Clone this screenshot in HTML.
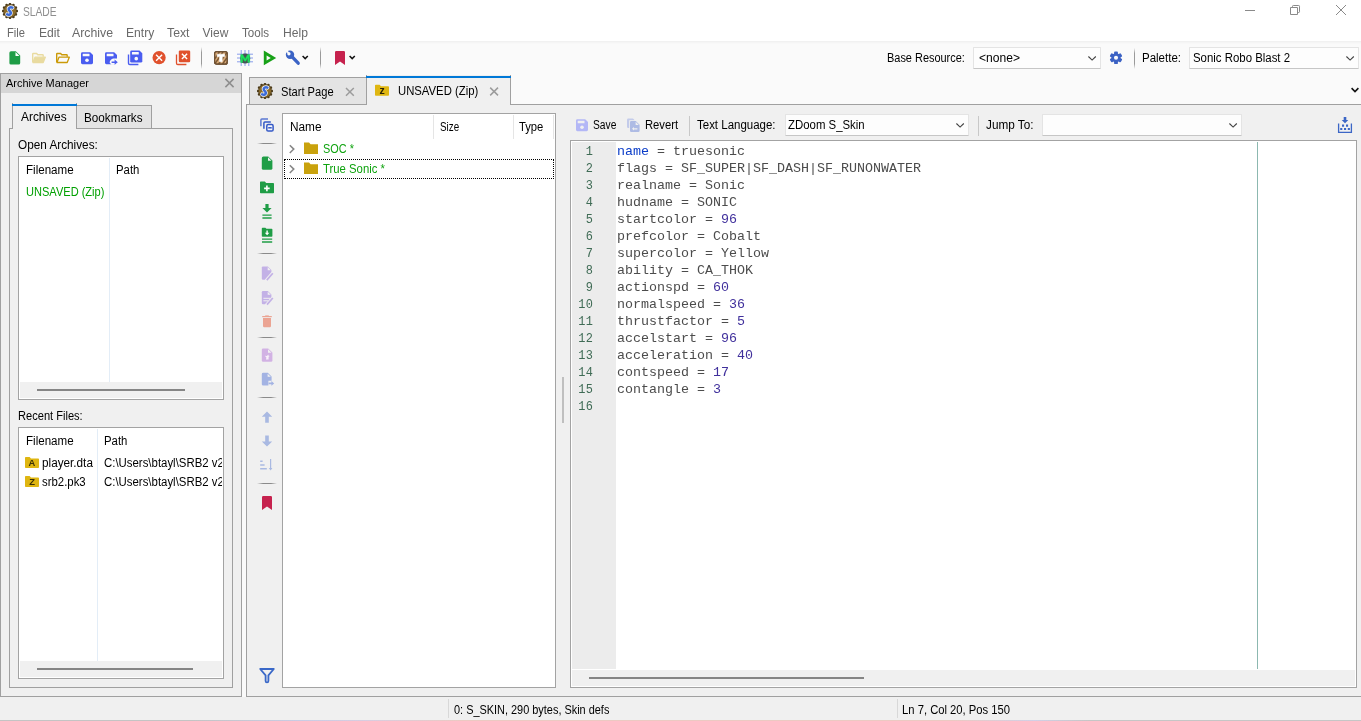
<!DOCTYPE html>
<html>
<head>
<meta charset="utf-8">
<title>SLADE</title>
<style>
*{box-sizing:border-box;margin:0;padding:0}
html,body{width:1361px;height:721px;overflow:hidden;background:#f0f0f0}
body{font-family:"Liberation Sans",sans-serif;font-size:12px;color:#000;position:relative}
.a{position:absolute}
.t{position:absolute;white-space:nowrap;line-height:14px;font-size:12px;transform-origin:0 0}
svg{position:absolute;overflow:visible}
.code{position:absolute;font-family:"Liberation Mono",monospace;font-size:13.333px;line-height:17px;white-space:pre;color:#4c4c4c}
.ln{position:absolute;text-align:right;font-family:"Liberation Mono",monospace;font-size:13.333px;line-height:17px;color:#3f6b55;white-space:pre}
.kw{color:#0a3cc8}
.num{color:#40309c}
</style>
</head>
<body>
<div id="root" style="position:absolute;left:0;top:0;width:1361px;height:721px;will-change:transform">
<div class="a" style="left:0px;top:0px;width:1361px;height:42px;background:#fff;"></div>
<div class="a" style="left:0px;top:42px;width:1361px;height:31px;background:#fafafa;"></div>
<div class="a" style="left:0px;top:41px;width:1361px;height:1px;background:#f1f1f1;"></div>
<div class="a" style="left:0px;top:42px;width:1361px;height:1px;background:#f5f5f5;"></div>
<div class="a" style="left:0px;top:43px;width:1361px;height:1px;background:#f8f8f8;"></div>
<svg style="left:10px;top:11px" width="2" height="2" viewBox="0 0 2 2"><g><rect x="-1.2" y="-8" width="2.4" height="2.6" rx=".7" transform="rotate(0)" fill="#4a3a1a"/><rect x="-1.2" y="-8" width="2.4" height="2.6" rx=".7" transform="rotate(30)" fill="#4a3a1a"/><rect x="-1.2" y="-8" width="2.4" height="2.6" rx=".7" transform="rotate(60)" fill="#4a3a1a"/><rect x="-1.2" y="-8" width="2.4" height="2.6" rx=".7" transform="rotate(90)" fill="#4a3a1a"/><rect x="-1.2" y="-8" width="2.4" height="2.6" rx=".7" transform="rotate(120)" fill="#4a3a1a"/><rect x="-1.2" y="-8" width="2.4" height="2.6" rx=".7" transform="rotate(150)" fill="#4a3a1a"/><rect x="-1.2" y="-8" width="2.4" height="2.6" rx=".7" transform="rotate(180)" fill="#4a3a1a"/><rect x="-1.2" y="-8" width="2.4" height="2.6" rx=".7" transform="rotate(210)" fill="#4a3a1a"/><rect x="-1.2" y="-8" width="2.4" height="2.6" rx=".7" transform="rotate(240)" fill="#4a3a1a"/><rect x="-1.2" y="-8" width="2.4" height="2.6" rx=".7" transform="rotate(270)" fill="#4a3a1a"/><rect x="-1.2" y="-8" width="2.4" height="2.6" rx=".7" transform="rotate(300)" fill="#4a3a1a"/><rect x="-1.2" y="-8" width="2.4" height="2.6" rx=".7" transform="rotate(330)" fill="#4a3a1a"/><circle r="6.9" fill="#57441f"/><circle r="6" fill="#8c6c2a"/><g transform="scale(0.8)"><path d="M3 -4.3C0.6 -5.3 -2.2 -4.2 -1.5 -1.8C-1 0 1.7 0.9 1 3C0.4 4.9 -2 5 -3.5 4.3" fill="none" stroke="#eef2fa" stroke-width="5" stroke-linecap="round"/><path d="M3 -4.3C0.6 -5.3 -2.2 -4.2 -1.5 -1.8C-1 0 1.7 0.9 1 3C0.4 4.9 -2 5 -3.5 4.3" fill="none" stroke="#3b6bd8" stroke-width="3.2" stroke-linecap="round"/></g></g></svg>
<div class="t " style="left:23.30px;top:4.9px;font-size:12px;color:#8e8e8e;transform:scaleX(0.8533);">SLADE</div>
<div class="t " style="left:6.50px;top:25.8px;font-size:12px;color:#6a6a6a;transform:scaleX(0.9320);">File</div>
<div class="t " style="left:38.50px;top:25.8px;font-size:12px;color:#6a6a6a;transform:scaleX(1.0090);">Edit</div>
<div class="t " style="left:72.10px;top:25.8px;font-size:12px;color:#6a6a6a;transform:scaleX(1.0266);">Archive</div>
<div class="t " style="left:126.30px;top:25.8px;font-size:12px;color:#6a6a6a;transform:scaleX(1.0094);">Entry</div>
<div class="t " style="left:167.10px;top:25.8px;font-size:12px;color:#6a6a6a;transform:scaleX(1.0215);">Text</div>
<div class="t " style="left:202.50px;top:25.8px;font-size:12px;color:#6a6a6a;">View</div>
<div class="t " style="left:241.70px;top:25.8px;font-size:12px;color:#6a6a6a;transform:scaleX(0.9664);">Tools</div>
<div class="t " style="left:282.70px;top:25.8px;font-size:12px;color:#6a6a6a;transform:scaleX(1.0101);">Help</div>
<svg style="left:1245px;top:5px" width="11" height="11" viewBox="0 0 11 11"><path d="M0 5.5H10" stroke="#8a8a8a" stroke-width="1" fill="none"/></svg>
<svg style="left:1290px;top:5px" width="11" height="11" viewBox="0 0 11 11"><path d="M0.5 2.5h7v7h-7z M2.5 2.5v-1.2q0-.8.8-.8h5.4q.8 0 .8.8v5.4q0 .8-.8.8H7.5" stroke="#8a8a8a" stroke-width="1" fill="none"/></svg>
<svg style="left:1336px;top:5px" width="11" height="11" viewBox="0 0 11 11"><path d="M0 0L10 10M10 0L0 10" stroke="#8a8a8a" stroke-width="1" fill="none"/></svg>
<div class="t " style="left:453.50px;top:702.6px;font-size:12px;color:#000;transform:scaleX(0.9098);">0: S_SKIN, 290 bytes, Skin defs</div>
<div class="t " style="left:901.70px;top:702.6px;font-size:12px;color:#000;transform:scaleX(0.9368);">Ln 7, Col 20, Pos 150</div>
<div class="a" style="left:448px;top:699px;width:1px;height:19px;background:#d8d8d8;"></div>
<div class="a" style="left:897px;top:699px;width:1px;height:19px;background:#d8d8d8;"></div>
<div class="a" style="left:0px;top:720px;width:1361px;height:1px;background:linear-gradient(90deg,#c4c4c4 0,#c4c4c4 14%,#c9cce4 22%,#d9cde0 27%,#ecc9c2 34%,#ecc9c2 70%,#d2d0e6 76%,#c6c6c6 80%,#c6c6c6 100%)"></div>
<svg style="left:9px;top:51px" width="12" height="15" viewBox="0 0 12 15"><g transform="translate(0.40,0.20)"><path d="M1.6 0H6.4L10.8 4.4V11.8Q10.8 13.4 9.2 13.4H1.6Q0 13.4 0 11.8V1.6Q0 0 1.6 0Z" fill="#1f9d46"/><path d="M6.1 0.8V4.7H10Z" fill="#fff"/></g></svg>
<svg style="left:32px;top:52px" width="15" height="12" viewBox="0 0 15 12"><g transform="translate(0.00,0.80)"><path d="M0.7 9.2V1.2Q0.7 0.7 1.2 0.7H4.6L5.8 2H10.6Q11.2 2 11.2 2.6V4" fill="none" stroke="#e9dba0" stroke-width="1.4"/><path d="M0.9 9.7L3 4.4H13.3L11.2 9.7Z" fill="#e9dba0" stroke="#e9dba0" stroke-width="1.3" stroke-linejoin="round"/></g></svg>
<svg style="left:56px;top:52px" width="15" height="12" viewBox="0 0 15 12"><g transform="translate(0.00,0.80)"><path d="M0.7 9.2V1.2Q0.7 0.7 1.2 0.7H4.6L5.8 2H10.6Q11.2 2 11.2 2.6V4" fill="none" stroke="#cb9a08" stroke-width="1.4"/><path d="M0.9 9.7L3 4.4H13.3L11.2 9.7Z" fill="#fafafa" stroke="#cb9a08" stroke-width="1.3" stroke-linejoin="round"/></g></svg>
<svg style="left:81px;top:52px" width="13" height="13" viewBox="0 0 13 13"><g transform="translate(0.00,0.20) scale(1.0000)"><path d="M1.4 0H9.2L12 2.8V10.6Q12 12 10.6 12H1.4Q0 12 0 10.6V1.4Q0 0 1.4 0Z" fill="#4a5df0"/><rect x="1.7" y="1.5" width="6.8" height="2.5" rx=".3" fill="#fafafa"/><circle cx="6" cy="8.1" r="1.8" fill="#fafafa"/></g></svg>
<svg style="left:105px;top:52px" width="14" height="14" viewBox="0 0 14 14"><g transform="translate(0.00,0.20)"><path d="M1.4 0H9.2L12 2.8V10.6Q12 12 10.6 12H1.4Q0 12 0 10.6V1.4Q0 0 1.4 0Z" fill="#4a5df0"/><rect x="1.7" y="1.5" width="6.8" height="2.5" rx=".3" fill="#fafafa"/><path d="M12.6 6.2H8.4Q5 7 4.6 10.2L6.4 12.6H12.6Z" fill="#fafafa"/><path d="M6.6 9.2H9.6V7.4L12.8 10 9.6 12.6V10.8H6.6Z" fill="#4a5df0"/></g></svg>
<svg style="left:127px;top:50px" width="16" height="16" viewBox="0 0 16 16"><g transform="translate(0.80,0.60)"><path d="M0.7 4V12.6Q0.7 13.9 2 13.9H10.6" fill="none" stroke="#4a5df0" stroke-width="1.4"/></g></svg>
<svg style="left:130px;top:50px" width="14" height="14" viewBox="0 0 14 14"><g transform="translate(0.20,0.50) scale(1.0083)"><path d="M1.4 0H9.2L12 2.8V10.6Q12 12 10.6 12H1.4Q0 12 0 10.6V1.4Q0 0 1.4 0Z" fill="#4a5df0"/><rect x="1.7" y="1.5" width="6.8" height="2.5" rx=".3" fill="#fafafa"/><circle cx="6" cy="8.1" r="1.8" fill="#fafafa"/></g></svg>
<svg style="left:152px;top:51px" width="15" height="15" viewBox="0 0 15 15"><g transform="translate(0.40,0.00)"><circle cx="6.7" cy="6.7" r="6.6" fill="#e0512d"/><path d="M3.7 3.7L9.7 9.7M9.7 3.7L3.7 9.7" stroke="#fff" stroke-width="1.4"/></g></svg>
<svg style="left:175px;top:50px" width="16" height="16" viewBox="0 0 16 16"><g transform="translate(0.80,0.60)"><path d="M0.7 4V12.6Q0.7 13.9 2 13.9H10.6" fill="none" stroke="#e0512d" stroke-width="1.3"/><rect x="3" y="0" width="11.4" height="11.6" rx="1.2" fill="#e0512d"/><path d="M6.1 3.2L11.3 8.4M11.3 3.2L6.1 8.4" stroke="#fff" stroke-width="1.4"/></g></svg>
<div class="a" style="left:201px;top:47px;width:1px;height:22px;background:linear-gradient(#fafafa,#9a9a9a 25%,#9a9a9a 75%,#fafafa)"></div>
<svg style="left:214px;top:51px" width="15" height="15" viewBox="0 0 15 15"><rect x="0.6" y="0.6" width="12.6" height="12.6" rx="2" fill="#d9aa78" stroke="#6f5235" stroke-width="1.2"/><path d="M1 7.6L5.4 1M1 12.6L9 1M4.6 13L12.8 1.6M8.6 13L12.8 6.8M12 13L13 11.6" stroke="#6b4a28" stroke-width="1.5" opacity=".85"/><rect x="0.6" y="0.6" width="12.6" height="12.6" rx="2" fill="none" stroke="#6f5235" stroke-width="1.2"/><path d="M3.2 3.2H10.6V5.6H8.2V10.8H5.6V5.6H3.2Z" fill="#fff" stroke="#fff" stroke-width=".6" stroke-linejoin="round"/></svg>
<svg style="left:237px;top:50px" width="17" height="17" viewBox="0 0 17 17"><path d="M4.2 0V16M8 0V16M11.8 0V16M0 4.2H16M0 8H16M0 11.8H16" stroke="#4a68e4" stroke-width=".8" opacity=".8"/><circle cx="8.2" cy="8.6" r="5" fill="#4a5058"/><path d="M3.7 12.5V4.6H5.8L8.2 8.8 10.6 4.6H12.7V12.5H10.7V7.9L8.8 11.2H7.6L5.7 7.9V12.5Z" fill="#1fe05e" stroke="#16c652" stroke-width=".4"/></svg>
<svg style="left:263px;top:50px" width="14" height="16" viewBox="0 0 14 16"><g transform="translate(0.80,0.60)"><path fill-rule="evenodd" d="M0 0L12.4 7.35 0 14.7ZM2.8 4.9L7 7.35 2.8 9.8Z" fill="#17a117"/></g></svg>
<svg style="left:285px;top:50px" width="17" height="17" viewBox="0 0 17 17"><path d="M6 5.6L13.2 13.2" stroke="#3b63c5" stroke-width="3.3" stroke-linecap="round"/><circle cx="5" cy="4.8" r="4.2" fill="#3b63c5"/><path d="M4.6 4.2L-0.5 1.2 2 -1.6Z" fill="#fafafa"/><circle cx="3.9" cy="3.7" r="1.7" fill="#fafafa"/></svg>
<svg style="left:302px;top:55px" width="8" height="5" viewBox="0 0 8 5"><g transform="translate(0.00,0.40)"><path d="M0.6 0.6L3.2 3.2 5.8 0.6" fill="none" stroke="#111" stroke-width="1.5"/></g></svg>
<div class="a" style="left:320px;top:47px;width:1px;height:22px;background:linear-gradient(#fafafa,#9a9a9a 25%,#9a9a9a 75%,#fafafa)"></div>
<svg style="left:335px;top:51px" width="11" height="15" viewBox="0 0 11 15"><path d="M1.2 0H8.8Q10 0 10 1.2V14L5.0 10.6 0 14V1.2Q0 0 1.2 0Z" fill="#c6224e"/></svg>
<svg style="left:349px;top:55px" width="8" height="5" viewBox="0 0 8 5"><g transform="translate(0.00,0.40)"><path d="M0.6 0.6L3.2 3.2 5.8 0.6" fill="none" stroke="#111" stroke-width="1.5"/></g></svg>
<div class="t " style="left:887.00px;top:50.8px;font-size:12px;color:#000;transform:scaleX(0.9119);">Base Resource:</div>
<div class="a" style="left:973px;top:47px;width:128px;height:22px;background:#fdfdfd;border:1px solid #e4e4e4;border-radius:1px;border-bottom-color:#c6c6c6"></div>
<svg style="left:1088px;top:56px" width="10" height="6" viewBox="0 0 10 6"><path d="M0.4 0.5L4.1 4.1 7.8 0.5" fill="none" stroke="#404040" stroke-width="1.1"/></svg>
<div class="t " style="left:978.50px;top:50.8px;font-size:12px;color:#000;transform:scaleX(1.0077);">&lt;none&gt;</div>
<svg style="left:1116px;top:57px" width="2" height="2" viewBox="0 0 2 2"><g transform="translate(0.00,0.80)"><g><rect x="-1.9" y="-6.3" width="3.8" height="3.4" rx=".9" transform="rotate(0)" fill="#3c62c4"/><rect x="-1.9" y="-6.3" width="3.8" height="3.4" rx=".9" transform="rotate(60)" fill="#3c62c4"/><rect x="-1.9" y="-6.3" width="3.8" height="3.4" rx=".9" transform="rotate(120)" fill="#3c62c4"/><rect x="-1.9" y="-6.3" width="3.8" height="3.4" rx=".9" transform="rotate(180)" fill="#3c62c4"/><rect x="-1.9" y="-6.3" width="3.8" height="3.4" rx=".9" transform="rotate(240)" fill="#3c62c4"/><rect x="-1.9" y="-6.3" width="3.8" height="3.4" rx=".9" transform="rotate(300)" fill="#3c62c4"/><circle r="4.6" fill="#3c62c4"/><circle r="2.05" fill="#fafafa"/></g></g></svg>
<div class="a" style="left:1134px;top:48px;width:1px;height:21px;background:linear-gradient(#fafafa,#9a9a9a 25%,#9a9a9a 75%,#fafafa)"></div>
<div class="t " style="left:1142.20px;top:50.8px;font-size:12px;color:#000;transform:scaleX(0.9585);">Palette:</div>
<div class="a" style="left:1189px;top:47px;width:170px;height:22px;background:#fdfdfd;border:1px solid #e4e4e4;border-radius:1px;border-bottom-color:#c6c6c6"></div>
<svg style="left:1346px;top:56px" width="10" height="6" viewBox="0 0 10 6"><path d="M0.4 0.5L4.1 4.1 7.8 0.5" fill="none" stroke="#404040" stroke-width="1.1"/></svg>
<div class="t " style="left:1193.10px;top:50.8px;font-size:12px;color:#000;transform:scaleX(0.9510);">Sonic Robo Blast 2</div>
<div class="a" style="left:0px;top:73px;width:242px;height:624px;background:#f0f0f0;border:1px solid #a0a0a0;"></div>
<div class="a" style="left:1px;top:74px;width:240px;height:19px;background:#d6d6d6;"></div>
<div class="t " style="left:5.50px;top:76.3px;font-size:10.6px;color:#000;transform:scaleX(1.0354);">Archive Manager</div>
<svg style="left:225px;top:78px" width="10" height="10" viewBox="0 0 10 10"><g transform="translate(0.00,0.50)"><path d="M0.4 0.4L8.6 8.6M8.6 0.4L0.4 8.6" stroke="#8e8e8e" stroke-width="1.5" fill="none"/></g></svg>
<div class="a" style="left:242px;top:73px;width:4px;height:624px;background:#fafafa;"></div>
<div class="a" style="left:9px;top:128px;width:224px;height:560px;background:#f0f0f0;border:1px solid #a0a0a0;"></div>
<div class="a" style="left:76px;top:105px;width:76px;height:24px;background:#e4e4e4;border:1px solid #a0a0a0;"></div>
<div class="a" style="left:12px;top:103px;width:65px;height:26px;background:#f0f0f0;border:1px solid #a0a0a0;border-bottom:none;border-top:none"></div>
<div class="a" style="left:12px;top:104px;width:65px;height:2px;background:#0078d7;"></div>
<div class="t " style="left:20.90px;top:110.2px;font-size:12px;color:#000;transform:scaleX(0.9905);">Archives</div>
<div class="t " style="left:84.00px;top:110.8px;font-size:12px;color:#000;transform:scaleX(0.9750);">Bookmarks</div>
<div class="t " style="left:18.10px;top:138.2px;font-size:12px;color:#000;transform:scaleX(0.9806);">Open Archives:</div>
<div class="a" style="left:18px;top:156px;width:206px;height:244px;background:#fff;border:1px solid #a3a3a3;"></div>
<div class="a" style="left:20px;top:382px;width:202px;height:16px;background:#f0f0f0;"></div>
<div class="a" style="left:37px;top:389px;width:148px;height:2px;background:#858585;"></div>
<div class="a" style="left:109px;top:158px;width:1px;height:224px;background:#e3edf7;"></div>
<div class="t " style="left:26.10px;top:162.6px;font-size:12px;color:#000;transform:scaleX(0.9653);">Filename</div>
<div class="t " style="left:116.30px;top:162.6px;font-size:12px;color:#000;transform:scaleX(0.9455);">Path</div>
<div class="t " style="left:26.30px;top:184.8px;font-size:12px;color:#00a000;transform:scaleX(0.9210);">UNSAVED (Zip)</div>
<div class="t " style="left:18.30px;top:409.0px;font-size:12px;color:#000;transform:scaleX(0.9237);">Recent Files:</div>
<div class="a" style="left:18px;top:427px;width:206px;height:252px;background:#fff;border:1px solid #a3a3a3;"></div>
<div class="a" style="left:20px;top:661px;width:202px;height:16px;background:#f0f0f0;"></div>
<div class="a" style="left:37px;top:668px;width:156px;height:2px;background:#858585;"></div>
<div class="a" style="left:97px;top:429px;width:1px;height:232px;background:#e3edf7;"></div>
<div class="t " style="left:26.10px;top:433.8px;font-size:12px;color:#000;transform:scaleX(0.9653);">Filename</div>
<div class="t " style="left:104.10px;top:433.8px;font-size:12px;color:#000;transform:scaleX(0.9455);">Path</div>
<svg style="left:25px;top:457px" width="15" height="12" viewBox="0 0 15 12"><path d="M0.8 0H4.6L6 1.4H13.2Q14 1.4 14 2.2V10.2Q14 11 13.2 11H0.8Q0 11 0 10.2V0.8Q0 0 0.8 0Z" fill="#dfb611"/><text x="7" y="9.4" font-family="Liberation Sans" font-weight="bold" font-size="9.4" text-anchor="middle" fill="#3a3004">A</text></svg>
<svg style="left:25px;top:476px" width="15" height="12" viewBox="0 0 15 12"><path d="M0.8 0H4.6L6 1.4H13.2Q14 1.4 14 2.2V10.2Q14 11 13.2 11H0.8Q0 11 0 10.2V0.8Q0 0 0.8 0Z" fill="#dfb611"/><text x="7" y="9.4" font-family="Liberation Sans" font-weight="bold" font-size="9.4" text-anchor="middle" fill="#3a3004">Z</text></svg>
<div class="t " style="left:42.30px;top:456.2px;font-size:12px;color:#000;transform:scaleX(0.9784);">player.dta</div>
<div class="t " style="left:42.30px;top:475.2px;font-size:12px;color:#000;transform:scaleX(0.9491);">srb2.pk3</div>
<div class="a" style="left:99px;top:455px;width:123px;height:40px;overflow:hidden">
<div class="t " style="left:5.10px;top:1.2px;font-size:12px;color:#000;transform:scaleX(0.9506);">C:\Users\btayl\SRB2 v2.2</div>
<div class="t " style="left:5.10px;top:20.2px;font-size:12px;color:#000;transform:scaleX(0.9506);">C:\Users\btayl\SRB2 v2.2</div>
</div>
<div class="a" style="left:242px;top:73px;width:1119px;height:31px;background:#fafafa;"></div>
<div class="a" style="left:246px;top:104px;width:1120px;height:593px;background:#f0f0f0;border:1px solid #a0a0a0;"></div>
<div class="a" style="left:249px;top:77px;width:118px;height:28px;background:#e4e4e4;border:1px solid #a0a0a0;"></div>
<svg style="left:265px;top:91px" width="2" height="2" viewBox="0 0 2 2"><g><rect x="-1.2" y="-8" width="2.4" height="2.6" rx=".7" transform="rotate(0)" fill="#4a3a1a"/><rect x="-1.2" y="-8" width="2.4" height="2.6" rx=".7" transform="rotate(30)" fill="#4a3a1a"/><rect x="-1.2" y="-8" width="2.4" height="2.6" rx=".7" transform="rotate(60)" fill="#4a3a1a"/><rect x="-1.2" y="-8" width="2.4" height="2.6" rx=".7" transform="rotate(90)" fill="#4a3a1a"/><rect x="-1.2" y="-8" width="2.4" height="2.6" rx=".7" transform="rotate(120)" fill="#4a3a1a"/><rect x="-1.2" y="-8" width="2.4" height="2.6" rx=".7" transform="rotate(150)" fill="#4a3a1a"/><rect x="-1.2" y="-8" width="2.4" height="2.6" rx=".7" transform="rotate(180)" fill="#4a3a1a"/><rect x="-1.2" y="-8" width="2.4" height="2.6" rx=".7" transform="rotate(210)" fill="#4a3a1a"/><rect x="-1.2" y="-8" width="2.4" height="2.6" rx=".7" transform="rotate(240)" fill="#4a3a1a"/><rect x="-1.2" y="-8" width="2.4" height="2.6" rx=".7" transform="rotate(270)" fill="#4a3a1a"/><rect x="-1.2" y="-8" width="2.4" height="2.6" rx=".7" transform="rotate(300)" fill="#4a3a1a"/><rect x="-1.2" y="-8" width="2.4" height="2.6" rx=".7" transform="rotate(330)" fill="#4a3a1a"/><circle r="6.9" fill="#57441f"/><circle r="6" fill="#8c6c2a"/><g transform="scale(0.8)"><path d="M3 -4.3C0.6 -5.3 -2.2 -4.2 -1.5 -1.8C-1 0 1.7 0.9 1 3C0.4 4.9 -2 5 -3.5 4.3" fill="none" stroke="#eef2fa" stroke-width="5" stroke-linecap="round"/><path d="M3 -4.3C0.6 -5.3 -2.2 -4.2 -1.5 -1.8C-1 0 1.7 0.9 1 3C0.4 4.9 -2 5 -3.5 4.3" fill="none" stroke="#3b6bd8" stroke-width="3.2" stroke-linecap="round"/></g></g></svg>
<div class="t " style="left:281.30px;top:84.6px;font-size:12px;color:#000;transform:scaleX(0.9272);">Start Page</div>
<svg style="left:345px;top:87px" width="10" height="10" viewBox="0 0 10 10"><g transform="translate(0.60,0.60)"><path d="M0.4 0.4L8.2 8.2M8.2 0.4L0.4 8.2" stroke="#9c9c9c" stroke-width="1.5" fill="none"/></g></svg>
<div class="a" style="left:366px;top:75px;width:145px;height:30px;background:#f0f0f0;border:1px solid #a0a0a0;border-bottom:none;border-top:none"></div>
<div class="a" style="left:366px;top:76px;width:145px;height:2px;background:#0078d7;"></div>
<svg style="left:375px;top:84px" width="15" height="12" viewBox="0 0 15 12"><g transform="translate(0.00,0.80)"><path d="M0.8 0H4.6L6 1.4H13.2Q14 1.4 14 2.2V10.2Q14 11 13.2 11H0.8Q0 11 0 10.2V0.8Q0 0 0.8 0Z" fill="#dfb611"/><text x="7" y="9.2" font-family="Liberation Sans" font-weight="bold" font-size="10.5" text-anchor="middle" fill="#2a2204">z</text></g></svg>
<div class="t " style="left:397.90px;top:83.8px;font-size:12px;color:#000;transform:scaleX(0.9421);">UNSAVED (Zip)</div>
<svg style="left:489px;top:87px" width="10" height="10" viewBox="0 0 10 10"><g transform="translate(0.80,0.20)"><path d="M0.4 0.4L8.2 8.2M8.2 0.4L0.4 8.2" stroke="#9c9c9c" stroke-width="1.5" fill="none"/></g></svg>
<svg style="left:1351px;top:87px" width="9" height="6" viewBox="0 0 9 6"><g transform="translate(0.00,0.50)"><path d="M0.6 0.6L4 4 7.4 0.6" fill="none" stroke="#111" stroke-width="1.6"/></g></svg>
<div class="a" style="left:282px;top:113px;width:274px;height:575px;background:#fff;border:1px solid #a3a3a3;"></div>
<div class="a" style="left:433px;top:115px;width:1px;height:24px;background:#e5e5e5;"></div>
<div class="a" style="left:513px;top:115px;width:1px;height:24px;background:#e5e5e5;"></div>
<div class="a" style="left:553px;top:115px;width:1px;height:24px;background:#e5e5e5;"></div>
<div class="t " style="left:290.10px;top:119.8px;font-size:12px;color:#000;transform:scaleX(0.9856);">Name</div>
<div class="t " style="left:440.20px;top:119.8px;font-size:12px;color:#000;transform:scaleX(0.8192);">Size</div>
<div class="t " style="left:519.10px;top:119.8px;font-size:12px;color:#000;transform:scaleX(0.9362);">Type</div>
<svg style="left:289px;top:144px" width="7" height="10" viewBox="0 0 7 10"><g transform="translate(0.00,0.60)"><path d="M0.8 0.6L4.8 4.5 0.8 8.4" fill="none" stroke="#858585" stroke-width="1.5"/></g></svg>
<svg style="left:304px;top:142px" width="15" height="13" viewBox="0 0 15 13"><g transform="translate(0.00,0.60)"><path d="M0 0H5L6.6 1.6H14V11.4H0Z" fill="#c9a20d"/></g></svg>
<div class="t " style="left:323.20px;top:142.0px;font-size:12px;color:#0fa30f;transform:scaleX(0.9076);">SOC *</div>
<svg style="left:289px;top:164px" width="7" height="10" viewBox="0 0 7 10"><g transform="translate(0.00,0.60)"><path d="M0.8 0.6L4.8 4.5 0.8 8.4" fill="none" stroke="#858585" stroke-width="1.5"/></g></svg>
<svg style="left:304px;top:162px" width="15" height="13" viewBox="0 0 15 13"><g transform="translate(0.00,0.60)"><path d="M0 0H5L6.6 1.6H14V11.4H0Z" fill="#c9a20d"/></g></svg>
<div class="t " style="left:322.50px;top:162.0px;font-size:12px;color:#0fa30f;transform:scaleX(0.9448);">True Sonic *</div>
<div class="a" style="left:284px;top:159px;width:270px;height:20px;border:1px dotted #000"></div>
<svg style="left:260px;top:118px" width="15" height="15" viewBox="0 0 15 15"><path d="M0.9 8.3V1.9Q0.9 0.9 1.9 0.9H8" fill="none" stroke="#5b78d2" stroke-width="1.5"/><path d="M3.9 10.7V4.9Q3.9 3.9 4.9 3.9H10.8" fill="none" stroke="#3358c6" stroke-width="1.5"/><rect x="6.8" y="6.6" width="6.3" height="6.5" rx="1.3" fill="#f6f6fa" stroke="#3358c6" stroke-width="1.5"/><path d="M8.2 9.8H11.7" stroke="#3358c6" stroke-width="1.5"/></svg>
<div class="a" style="left:257px;top:143px;width:20px;height:1px;background:linear-gradient(90deg,#f0f0f0,#8a8a8a 30%,#8a8a8a 70%,#f0f0f0)"></div>
<svg style="left:261px;top:156px" width="12" height="15" viewBox="0 0 12 15"><g transform="translate(0.80,0.40)"><path d="M1.6 0H6.4L10.6 4.2V11.8Q10.6 13.4 9 13.4H1.6Q0 13.4 0 11.8V1.6Q0 0 1.6 0Z" fill="#1f9d46"/><path d="M6.2 0.9V4.4H9.7Z" fill="#f0f0f0"/></g></svg>
<svg style="left:260px;top:181px" width="15" height="13" viewBox="0 0 15 13"><g transform="translate(0.00,0.40)"><path d="M0.8 0H4.8L6.2 1.6H13.2Q14 1.6 14 2.4V11Q14 11.8 13.2 11.8H0.8Q0 11.8 0 11V0.8Q0 0 0.8 0Z" fill="#1f9d46"/><path d="M6.9 4.2V9.8M4.1 7H9.7" stroke="#fff" stroke-width="1.6"/></g></svg>
<svg style="left:262px;top:204px" width="11" height="16" viewBox="0 0 11 16"><path d="M3.4 0H6.6V4H9.6L5 8.6 0.4 4H3.4Z" fill="#1f9d46"/><path d="M0.4 11.2H9.6M0.4 14H9.6" stroke="#1f9d46" stroke-width="1.3"/></svg>
<svg style="left:261px;top:227px" width="12" height="16" viewBox="0 0 12 16"><g transform="translate(0.80,0.80)"><path d="M0.8 0H3.6L4.6 1H9.8Q10.6 1 10.6 1.8V8.2Q10.6 9 9.8 9H0.8Q0 9 0 8.2V0.8Q0 0 0.8 0Z" fill="#1f9d46"/><path d="M4.6 2.6H6V5H7.6L5.3 7.4 3 5H4.6Z" fill="#fff"/><path d="M0.2 11.4H10.4M0.2 14.2H10.4" stroke="#1f9d46" stroke-width="1.3"/></g></svg>
<div class="a" style="left:257px;top:253px;width:20px;height:1px;background:linear-gradient(90deg,#f0f0f0,#8a8a8a 30%,#8a8a8a 70%,#f0f0f0)"></div>
<svg style="left:261px;top:266px" width="13" height="15" viewBox="0 0 13 15"><g transform="translate(0.80,0.40)"><path d="M1.2 0H6L9.6 3.6V5.6L2.9 13.3H1.2Q0 13.3 0 12.1V1.2Q0 0 1.2 0Z" fill="#c3b1e6"/><path d="M5.9 0.7V3.8H9Z" fill="#f0f0f0"/><path d="M5 13.7L11 6.8" stroke="#c3b1e6" stroke-width="1.7"/></g></svg>
<svg style="left:261px;top:291px" width="13" height="15" viewBox="0 0 13 15"><g transform="translate(0.80,0.00)"><path d="M1.2 0H6L9.6 3.6V6L3.2 13.2H1.2Q0 13.2 0 12V1.2Q0 0 1.2 0Z" fill="#c3b1e6"/><path d="M5.9 0.7V3.8H9Z" fill="#f0f0f0"/><path d="M1.6 7.3H8.4M1.6 9.8H6.2" stroke="#f0f0f0" stroke-width="1"/><path d="M5.2 13.6L11 7" stroke="#c3b1e6" stroke-width="1.7"/></g></svg>
<svg style="left:262px;top:315px" width="11" height="13" viewBox="0 0 11 13"><g transform="translate(0.20,0.40)"><path d="M0 1.2H9.6" stroke="#eba493" stroke-width="1.2"/><path d="M3 0.6H6.6" stroke="#eba493" stroke-width="1.2"/><path d="M0.8 2.6H8.8V10.6Q8.8 11.8 7.6 11.8H2Q0.8 11.8 0.8 10.6Z" fill="#eba493"/></g></svg>
<div class="a" style="left:257px;top:337px;width:20px;height:1px;background:linear-gradient(90deg,#f0f0f0,#8a8a8a 30%,#8a8a8a 70%,#f0f0f0)"></div>
<svg style="left:261px;top:348px" width="12" height="15" viewBox="0 0 12 15"><g transform="translate(0.80,0.40)"><path d="M1.4 0H6.4L10.6 4.2V12Q10.6 13.4 9.2 13.4H1.4Q0 13.4 0 12V1.4Q0 0 1.4 0Z" fill="#d2b2e4"/><path d="M6.2 0.9V4.4H9.7Z" fill="#f0f0f0"/><path d="M3 7.4L4.6 9 4.2 11H6.8V8.4L8 7.6 6.8 7.4 6.4 6 5.2 7.6Z" fill="#f8f0fa"/></g></svg>
<svg style="left:261px;top:372px" width="14" height="14" viewBox="0 0 14 14"><g transform="translate(0.80,0.80)"><path d="M1.4 0H6L9.8 3.8V8H6.6V12.8H1.4Q0 12.8 0 11.4V1.4Q0 0 1.4 0Z" fill="#a3b3e3"/><path d="M5.8 0.9V4H9Z" fill="#f0f0f0"/><path d="M6.8 9.8H9.6V8.2L12.4 10.6 9.6 13V11.4H6.8Z" fill="#a3b3e3"/></g></svg>
<div class="a" style="left:257px;top:397px;width:20px;height:1px;background:linear-gradient(90deg,#f0f0f0,#8a8a8a 30%,#8a8a8a 70%,#f0f0f0)"></div>
<svg style="left:261px;top:411px" width="12" height="13" viewBox="0 0 12 13"><g transform="translate(0.80,0.60)"><path d="M5.2 0L10.4 5.2H7V11.2H3.4V5.2H0Z" fill="#a9b9e2"/></g></svg>
<svg style="left:261px;top:435px" width="12" height="13" viewBox="0 0 12 13"><g transform="translate(0.80,0.40)"><path d="M5.2 11.2L10.4 6H7V0H3.4V6H0Z" fill="#a9b9e2"/></g></svg>
<svg style="left:260px;top:459px" width="15" height="13" viewBox="0 0 15 13"><path d="M0.2 2.2H2.6M0.2 6H4.6M0.2 9.8H6.8" stroke="#a9b9e2" stroke-width="1.4"/><path d="M10.6 0V10" stroke="#a9b9e2" stroke-width="1.2"/><path d="M8.8 9L10.6 11.6 12.4 9Z" fill="#a9b9e2"/></svg>
<div class="a" style="left:257px;top:483px;width:20px;height:1px;background:linear-gradient(90deg,#f0f0f0,#8a8a8a 30%,#8a8a8a 70%,#f0f0f0)"></div>
<svg style="left:262px;top:496px" width="11" height="15" viewBox="0 0 11 15"><path d="M1.2 0H8.8Q10 0 10 1.2V14L5.0 10.6 0 14V1.2Q0 0 1.2 0Z" fill="#c6224e"/></svg>
<svg style="left:259px;top:668px" width="17" height="17" viewBox="0 0 17 17"><path d="M1.2 1H14.8L9.4 7.4V13Q9.4 14.4 8 14.4 6.6 14.4 6.6 13V7.4Z" fill="none" stroke="#3a68c8" stroke-width="1.8" stroke-linejoin="round"/></svg>
<div class="a" style="left:562px;top:377px;width:2px;height:46px;background:#bfbfbf;"></div>
<svg style="left:576px;top:119px" width="13" height="13" viewBox="0 0 13 13"><g transform="translate(0.00,0.20) scale(1.0000)"><path d="M1.4 0H9.2L12 2.8V10.6Q12 12 10.6 12H1.4Q0 12 0 10.6V1.4Q0 0 1.4 0Z" fill="#b3b7f6"/><rect x="1.7" y="1.5" width="6.8" height="2.5" rx=".3" fill="#f0f0f0"/><circle cx="6" cy="8.1" r="1.8" fill="#f0f0f0"/></g></svg>
<div class="t " style="left:593.30px;top:118.0px;font-size:12px;color:#000;transform:scaleX(0.8548);">Save</div>
<svg style="left:627px;top:118px" width="14" height="15" viewBox="0 0 14 15"><g transform="translate(0.00,0.40)"><path d="M1.4 0H6L8 2V9.6H1.4Q0 9.6 0 8.4V1.4Q0 0 1.4 0Z" fill="#c3cbea"/><path d="M2.2 1.8H9.6L13.4 5.6V14H2.2Z" fill="#f0f0f0"/><path d="M4.2 2.6H8.8L12.6 6.4V12.4Q12.6 13.6 11.4 13.6H4.2Q3 13.6 3 12.4V3.8Q3 2.6 4.2 2.6Z" fill="#aebbe4"/><path d="M8.6 3.4V6.6H11.8Z" fill="#f0f0f0"/><path d="M5 10.4L7 8.6V9.8H10.4V11H7V12.2Z" fill="#f0f0f0"/></g></svg>
<div class="t " style="left:645.30px;top:118.0px;font-size:12px;color:#000;transform:scaleX(0.9369);">Revert</div>
<div class="a" style="left:689px;top:116px;width:1px;height:20px;background:#c8c8c8;"></div>
<div class="t " style="left:697.30px;top:118.0px;font-size:12px;color:#000;transform:scaleX(0.9571);">Text Language:</div>
<div class="a" style="left:785px;top:114px;width:184px;height:22px;background:#fdfdfd;border:1px solid #e4e4e4;border-radius:1px;border-bottom-color:#c6c6c6"></div>
<svg style="left:956px;top:123px" width="10" height="6" viewBox="0 0 10 6"><path d="M0.4 0.5L4.1 4.1 7.8 0.5" fill="none" stroke="#404040" stroke-width="1.1"/></svg>
<div class="t " style="left:788.10px;top:118.0px;font-size:12px;color:#000;transform:scaleX(0.9501);">ZDoom S_Skin</div>
<div class="a" style="left:978px;top:116px;width:1px;height:20px;background:#c8c8c8;"></div>
<div class="t " style="left:985.70px;top:118.0px;font-size:12px;color:#000;transform:scaleX(0.9802);">Jump To:</div>
<div class="a" style="left:1042px;top:114px;width:200px;height:22px;background:#fdfdfd;border:1px solid #e4e4e4;border-radius:1px;border-bottom-color:#c6c6c6"></div>
<svg style="left:1229px;top:123px" width="10" height="6" viewBox="0 0 10 6"><path d="M0.4 0.5L4.1 4.1 7.8 0.5" fill="none" stroke="#404040" stroke-width="1.1"/></svg>
<svg style="left:1338px;top:117px" width="15" height="17" viewBox="0 0 15 17"><path d="M5.7 0H8.3V3H10.3L7 6.3 3.7 3H5.7Z" fill="#3b66c6"/><path d="M0.6 6.6V15.4H13.4V6.6" fill="none" stroke="#3b66c6" stroke-width="1.3"/><path d="M4 7.6h2.1v2.1H4zM8 7.6h2.1v2.1H8zM2.2 11h2.1v2.1H2.2zM6 11h2.1v2.1H6zM9.8 11h2.1v2.1H9.8z" fill="#3b66c6"/></svg>
<div class="a" style="left:570px;top:140px;width:787px;height:548px;background:#fff;border:1px solid #a3a3a3;"></div>
<div class="a" style="left:572px;top:142px;width:44px;height:527px;background:#ececec;"></div>
<div class="a" style="left:572px;top:670px;width:783px;height:16px;background:#f0f0f0;"></div>
<div class="a" style="left:589px;top:677px;width:275px;height:2px;background:#858585;"></div>
<div class="a" style="left:1257px;top:142px;width:1px;height:527px;background:#8cb8b0;"></div>
<div class="code" style="left:617px;top:143px"><span class="kw">name</span> = truesonic
flags = SF_SUPER|SF_DASH|SF_RUNONWATER
realname = Sonic
hudname = SONIC
startcolor = <span class="num">96</span>
prefcolor = Cobalt
supercolor = Yellow
ability = CA_THOK
actionspd = <span class="num">60</span>
normalspeed = <span class="num">36</span>
thrustfactor = <span class="num">5</span>
accelstart = <span class="num">96</span>
acceleration = <span class="num">40</span>
contspeed = <span class="num">17</span>
contangle = <span class="num">3</span>
</div>
<div class="ln" style="left:569.5px;top:144px;width:24px;font-size:11.9px;letter-spacing:.55px">1
2
3
4
5
6
7
8
9
10
11
12
13
14
15
16</div>
</div>
</body>
</html>
